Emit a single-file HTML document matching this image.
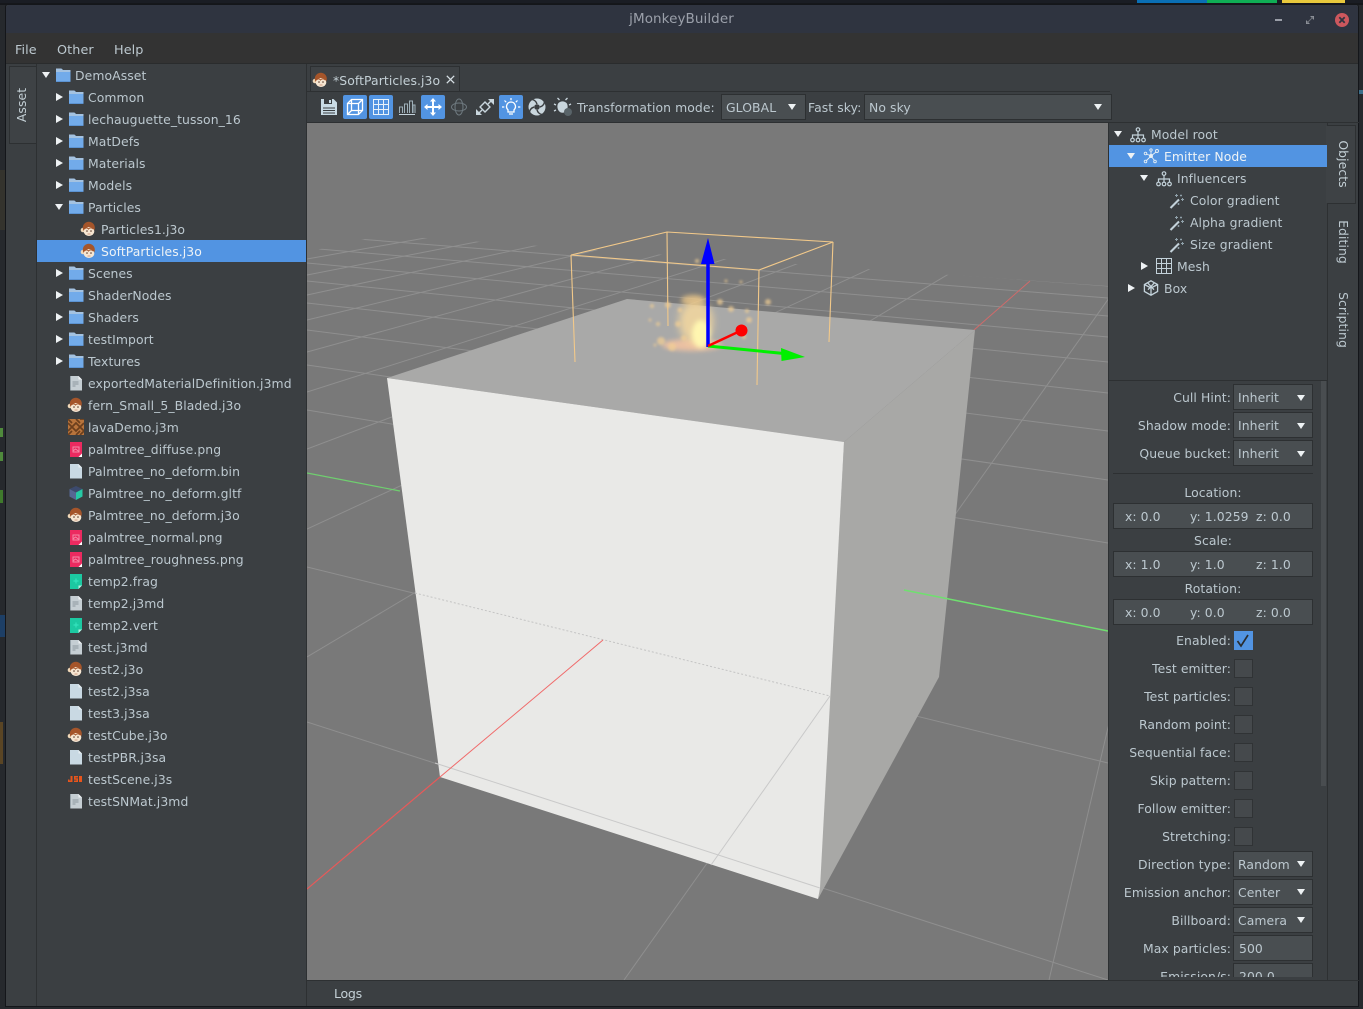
<!DOCTYPE html>
<html><head><meta charset="utf-8"><title>jMonkeyBuilder</title>
<style>
html,body{margin:0;padding:0;width:1363px;height:1009px;overflow:hidden;background:#26292d}
body{position:relative;font-family:"DejaVu Sans","Liberation Sans",sans-serif;font-size:12.4px;letter-spacing:.08px;color:#bcc8cf}
div,svg,i{position:absolute;display:block}
.p{background:#3b3f42}
.t{height:22px;line-height:22px;white-space:nowrap;margin-top:1px}
.l{height:22px;line-height:22px;white-space:nowrap;text-align:right;left:1109px;width:122px;margin-top:1px}
.c{height:22px;line-height:22px;white-space:nowrap;text-align:center;left:1113px;width:200px;margin-top:1px}
.i{width:16px;height:16px}
.ar{width:0;height:0;border-style:solid;border-color:transparent}
.ar.r{border-width:4.5px 0 4.5px 7px;border-left-color:#eef2f4}
.ar.d{border-width:6px 4.5px 0 4.5px;border-top-color:#eef2f4}
.cb{left:1233px;width:78px;height:24px;background:#494e51;border:1px solid #2d3032;line-height:24px;padding:0;box-sizing:content-box}
.cb span{position:absolute;left:4px;top:1px}
.cb i{position:absolute;left:63px;top:9px;width:0;height:0;border-style:solid;border-color:transparent;border-width:6px 4.500px 0 4.500px;border-top-color:#eef2f4}
.f{left:1113px;width:198px;height:24px;background:#494e51;border:1px solid #2d3032;line-height:24px}
.f span{position:absolute;top:1px}
.ck{left:1234px;width:17px;height:17px;background:#45494c;border:1px solid #303335}
.b{width:24px;height:24px;background:#5294e2;border-radius:2px;top:95px}
.tb{width:20px;height:20px;top:97px}
.da{left:1297px;border-width:6px 4.500px 0 4.500px !important}
</style></head><body>
<svg width="0" height="0" style="position:absolute">
<defs>
<symbol id="fo" viewBox="0 0 16 16"><path d="M1 1.500h5.300L8 3H15.500v12H1z" fill="#6ea6e4"/><path d="M1 1.500h5.300L8 3h7.500V5.500H1z" fill="#a4c2e0"/><path d="M1 5h14.500v10H1z" fill="#72abea"/><path d="M1 14h14.500v1H1z" fill="#5c93d2"/></symbol>
<symbol id="mk" viewBox="0 0 16 16"><circle cx="3" cy="9" r="2.300" fill="#f0d8b8"/><circle cx="8.800" cy="6.800" r="6" fill="#a5552a"/><ellipse cx="9" cy="10.500" rx="5.300" ry="4.500" fill="#f6e6d2"/><path d="M4.500 8c1-1.500 3-1.500 4 0 1-1.500 3.500-1.500 4.800 0" stroke="#a5552a" fill="none"/><circle cx="7" cy="10" r=".8" fill="#5a3a2a"/><circle cx="11" cy="10" r=".8" fill="#5a3a2a"/><path d="M7.500 13h3" stroke="#c98a70" stroke-width=".8"/></symbol>
<symbol id="dg" viewBox="0 0 16 16"><path d="M3 1h8.500L15 4.500V15.500H3z" fill="#c5ced3"/><path d="M11.500 1L15 4.500h-3.500z" fill="#eef2f4"/><path d="M5.500 7h6M5.500 9h6M5.500 11h3" stroke="#8b969d" stroke-width="1"/><path d="M3 1h1v14.500H3z" fill="#98a4ab"/></symbol>
<symbol id="db" viewBox="0 0 16 16"><path d="M3 1h8.500L15 4.500V15.500H3z" fill="#c9d9e3"/><path d="M11.500 1v3.500H15z" fill="#e8eff3"/></symbol>
<symbol id="pn" viewBox="0 0 16 16"><path d="M3 1h12v15H3z" fill="#ec2a60"/><path d="M11.500 16l3.500-3.500V16z" fill="#fff"/><path d="M6 6h6v5H6z" fill="none" stroke="#f58aa8" stroke-width="1"/><path d="M6 10l2.500-2 3.500 2.500" stroke="#f58aa8" fill="none"/></symbol>
<symbol id="tl" viewBox="0 0 16 16"><path d="M3 1h12v11.500L11.500 16H3z" fill="#1cc9a2"/><path d="M11.500 16v-3.500H15z" fill="#bdf0e2"/><path d="M6.500 8h5M9 5.500v5" stroke="#33e3bd" stroke-width="1.200"/></symbol>
<symbol id="gl" viewBox="0 0 16 16"><path d="M8 1l6.500 3L8 7.500 1.500 4z" fill="#3c4a6d"/><path d="M1.500 4L8 7.500V15l-6.500-3.500z" fill="#566793"/><path d="M14.500 4L8 7.500V15l6.500-3.500z" fill="#27c9a5"/></symbol>
<symbol id="lv" viewBox="0 0 16 16"><rect width="16" height="16" fill="#b8743c"/><path d="M0 4l4 4 4-4 4 4 4-4M0 12l4-4 4 4 4-4 4 4M0 0l4 4M8 0l4 4M8 16l4-4M0 16l4-4M12 16l4-4M12 0l4 0" stroke="#6b3f1d" stroke-width="1.700" fill="none"/></symbol>
<symbol id="js" viewBox="0 0 16 16"><path d="M1 8.500h1.500v1h1V5h2v6H1zM7 5h4v1.500H8.500v.8H11V11H7V9.500h2.500v-.7H7zM12 5h3v6h-3z" fill="#e8551c"/></symbol>
<symbol id="nd" viewBox="0 0 16 16" ><g fill="none" stroke="#c3d2da" stroke-width="1.200"><circle cx="8" cy="2.600" r="1.800"/><circle cx="2.500" cy="13" r="1.800"/><circle cx="8" cy="13" r="1.800"/><circle cx="13.500" cy="13" r="1.800"/><path d="M8 4.500v6.500M2.500 11V8h11v3"/></g></symbol>
<symbol id="em" viewBox="0 0 16 16"><g fill="none" stroke="#e8f0f5" stroke-width=".9"><circle cx="8" cy="8" r="1.500" fill="#e8f0f5"/><circle cx="2.500" cy="5.500" r="1.300"/><circle cx="8" cy="2" r="1.200"/><circle cx="14" cy="3" r="1.500"/><circle cx="2.500" cy="13.500" r="1.300"/><circle cx="12" cy="13.500" r="1.300"/><path d="M8 8L3.500 6M8 8V3.200M8 8l5-4M8 8l-4.500 4.500M8 8l3.500 4.500"/></g></symbol>
<symbol id="wd" viewBox="0 0 16 16"><path d="M1.500 15L10 6.500" stroke="#c3d2da" stroke-width="2"/><path d="M7.500 1v3M6 2.500h3M13.500 5v3M12 6.500h3M12 1.500v2M11 2.500h2M9.500 10v2M8.500 11h2" stroke="#8fa0a9" stroke-width="1"/></symbol>
<symbol id="ms" viewBox="0 0 16 16"><path d="M.5.5h15v15H.5zM5.500.500v15M10.500.500v15M.5 5.500h15M.5 10.500h15" fill="none" stroke="#c3d2da" stroke-width="1"/></symbol>
<symbol id="bx" viewBox="0 0 16 16"><path d="M8 .8l6.600 3.700v7L8 15.200l-6.600-3.700v-7zM1.400 4.500L8 8l6.600-3.500M8 8v7.200M4.500 2.700l6.500 7M11.500 2.700L5 9.700" fill="none" stroke="#c3d2da" stroke-width="1.300"/></symbol>
<filter id="bl" x="-40%" y="-40%" width="180%" height="180%"><feGaussianBlur stdDeviation="4"/></filter>
<filter id="bm" x="-40%" y="-40%" width="180%" height="180%"><feGaussianBlur stdDeviation="2.500"/></filter>
<filter id="bs" x="-60%" y="-60%" width="220%" height="220%"><feGaussianBlur stdDeviation="1.300"/></filter>
<clipPath id="gc"><path d="M383 235L1108 286V980H307V252z"/></clipPath>
</defs></svg>

<!-- outer desktop -->
<div style="left:0;top:0;width:1363px;height:3px;background:#1a1d24"></div>
<div style="left:0;top:3px;width:1363px;height:2px;background:#15171b"></div>
<div style="left:1137px;top:0;width:70px;height:3px;background:#0a6fb5"></div>
<div style="left:1207px;top:0;width:70px;height:3px;background:#0fae55"></div>
<div style="left:1282px;top:0;width:63px;height:3px;background:#e8c83c"></div>
<div style="left:0;top:615px;width:5px;height:22px;background:#1d3f66"></div>
<div style="left:0;top:428px;width:3px;height:9px;background:#4f8a3c"></div>
<div style="left:0;top:452px;width:3px;height:9px;background:#4f8a3c"></div>
<div style="left:0;top:490px;width:3px;height:13px;background:#3f7a2c"></div>
<div style="left:0;top:722px;width:3px;height:42px;background:#5a4524"></div>
<div style="left:0;top:170px;width:5px;height:60px;background:#34332d"></div>
<div style="left:1359px;top:90px;width:4px;height:4px;background:#3a6e8a"></div>

<!-- window -->
<div style="left:5px;top:4px;width:1354px;height:1003px;background:#3b3f42;border:1px solid #14161a;box-sizing:border-box;border-radius:3px 3px 0 0;overflow:hidden"></div>
<div style="left:6px;top:5px;width:1352px;height:28px;background:#2f3440;border-radius:3px 3px 0 0"></div>
<div style="left:0;top:8px;width:1363px;height:22px;line-height:22px;text-align:center;font-size:13.500px;color:#9ba0aa">jMonkeyBuilder</div>
<div style="left:1275px;top:19px;width:7px;height:2px;background:#9a9ea8"></div>
<svg style="left:1306px;top:16px" width="8" height="8" viewBox="0 0 8 8"><path d="M4 0h4v4zM0 4l4 4H0z" fill="#8d9199"/><path d="M1 7l6-6" stroke="#6d7179"/></svg>
<svg style="left:1335px;top:13px" width="14" height="14" viewBox="0 0 14 14"><circle cx="7" cy="7" r="7" fill="#cc575d"/><path d="M4.300 4.300l5.400 5.400M9.700 4.300l-5.400 5.400" stroke="#2f3440" stroke-width="1.800"/></svg>
<!-- menu -->
<div style="left:6px;top:33px;width:1352px;height:30px;background:#333333"></div>
<div style="left:6px;top:63px;width:1352px;height:1px;background:#2a2c2d"></div>
<div class="t" style="left:15px;top:39px;font-size:12.800px">File</div>
<div class="t" style="left:57px;top:39px;font-size:12.800px">Other</div>
<div class="t" style="left:114px;top:39px;font-size:12.800px">Help</div>

<!-- left tab -->
<div style="left:9px;top:66px;width:28px;height:78px;background:#3e4245;border:1px solid #2d3032;border-right:0;box-sizing:border-box"></div>
<div class="t" style="left:-8px;top:93px;width:60px;text-align:center;transform:rotate(-90deg);color:#c4d0d6">Asset</div>
<div style="left:36px;top:64px;width:1px;height:942px;background:#2d3032"></div>
<div style="left:306px;top:64px;width:1px;height:942px;background:#2d3032"></div>

<!-- asset tree -->
<div style="left:37px;top:240px;width:269px;height:22px;background:#5294e2"></div>
<i class="ar d" style="left:42px;top:72px"></i><svg class="i" style="left:55px;top:67px"><use href="#fo"/></svg><div class="t" style="left:75px;top:64px">DemoAsset</div>
<i class="ar r" style="left:56px;top:93px"></i><svg class="i" style="left:68px;top:89px"><use href="#fo"/></svg><div class="t" style="left:88px;top:86px">Common</div>
<i class="ar r" style="left:56px;top:115px"></i><svg class="i" style="left:68px;top:111px"><use href="#fo"/></svg><div class="t" style="left:88px;top:108px">lechauguette_tusson_16</div>
<i class="ar r" style="left:56px;top:137px"></i><svg class="i" style="left:68px;top:133px"><use href="#fo"/></svg><div class="t" style="left:88px;top:130px">MatDefs</div>
<i class="ar r" style="left:56px;top:159px"></i><svg class="i" style="left:68px;top:155px"><use href="#fo"/></svg><div class="t" style="left:88px;top:152px">Materials</div>
<i class="ar r" style="left:56px;top:181px"></i><svg class="i" style="left:68px;top:177px"><use href="#fo"/></svg><div class="t" style="left:88px;top:174px">Models</div>
<i class="ar d" style="left:55px;top:204px"></i><svg class="i" style="left:68px;top:199px"><use href="#fo"/></svg><div class="t" style="left:88px;top:196px">Particles</div>
<svg class="i" style="left:80px;top:221px"><use href="#mk"/></svg><div class="t" style="left:101px;top:218px">Particles1.j3o</div>
<svg class="i" style="left:80px;top:243px"><use href="#mk"/></svg><div class="t" style="left:101px;top:240px;color:#eef3f6">SoftParticles.j3o</div>
<i class="ar r" style="left:56px;top:269px"></i><svg class="i" style="left:68px;top:265px"><use href="#fo"/></svg><div class="t" style="left:88px;top:262px">Scenes</div>
<i class="ar r" style="left:56px;top:291px"></i><svg class="i" style="left:68px;top:287px"><use href="#fo"/></svg><div class="t" style="left:88px;top:284px">ShaderNodes</div>
<i class="ar r" style="left:56px;top:313px"></i><svg class="i" style="left:68px;top:309px"><use href="#fo"/></svg><div class="t" style="left:88px;top:306px">Shaders</div>
<i class="ar r" style="left:56px;top:335px"></i><svg class="i" style="left:68px;top:331px"><use href="#fo"/></svg><div class="t" style="left:88px;top:328px">testImport</div>
<i class="ar r" style="left:56px;top:357px"></i><svg class="i" style="left:68px;top:353px"><use href="#fo"/></svg><div class="t" style="left:88px;top:350px">Textures</div>
<svg class="i" style="left:67px;top:375px"><use href="#dg"/></svg><div class="t" style="left:88px;top:372px">exportedMaterialDefinition.j3md</div>
<svg class="i" style="left:67px;top:397px"><use href="#mk"/></svg><div class="t" style="left:88px;top:394px">fern_Small_5_Bladed.j3o</div>
<svg class="i" style="left:68px;top:419px"><use href="#lv"/></svg><div class="t" style="left:88px;top:416px">lavaDemo.j3m</div>
<svg class="i" style="left:67px;top:441px"><use href="#pn"/></svg><div class="t" style="left:88px;top:438px">palmtree_diffuse.png</div>
<svg class="i" style="left:67px;top:463px"><use href="#db"/></svg><div class="t" style="left:88px;top:460px">Palmtree_no_deform.bin</div>
<svg class="i" style="left:68px;top:485px"><use href="#gl"/></svg><div class="t" style="left:88px;top:482px">Palmtree_no_deform.gltf</div>
<svg class="i" style="left:67px;top:507px"><use href="#mk"/></svg><div class="t" style="left:88px;top:504px">Palmtree_no_deform.j3o</div>
<svg class="i" style="left:67px;top:529px"><use href="#pn"/></svg><div class="t" style="left:88px;top:526px">palmtree_normal.png</div>
<svg class="i" style="left:67px;top:551px"><use href="#pn"/></svg><div class="t" style="left:88px;top:548px">palmtree_roughness.png</div>
<svg class="i" style="left:67px;top:573px"><use href="#tl"/></svg><div class="t" style="left:88px;top:570px">temp2.frag</div>
<svg class="i" style="left:67px;top:595px"><use href="#dg"/></svg><div class="t" style="left:88px;top:592px">temp2.j3md</div>
<svg class="i" style="left:67px;top:617px"><use href="#tl"/></svg><div class="t" style="left:88px;top:614px">temp2.vert</div>
<svg class="i" style="left:67px;top:639px"><use href="#dg"/></svg><div class="t" style="left:88px;top:636px">test.j3md</div>
<svg class="i" style="left:67px;top:661px"><use href="#mk"/></svg><div class="t" style="left:88px;top:658px">test2.j3o</div>
<svg class="i" style="left:67px;top:683px"><use href="#db"/></svg><div class="t" style="left:88px;top:680px">test2.j3sa</div>
<svg class="i" style="left:67px;top:705px"><use href="#db"/></svg><div class="t" style="left:88px;top:702px">test3.j3sa</div>
<svg class="i" style="left:67px;top:727px"><use href="#mk"/></svg><div class="t" style="left:88px;top:724px">testCube.j3o</div>
<svg class="i" style="left:67px;top:749px"><use href="#db"/></svg><div class="t" style="left:88px;top:746px">testPBR.j3sa</div>
<svg class="i" style="left:67px;top:771px"><use href="#js"/></svg><div class="t" style="left:88px;top:768px">testScene.j3s</div>
<svg class="i" style="left:67px;top:793px"><use href="#dg"/></svg><div class="t" style="left:88px;top:790px">testSNMat.j3md</div>

<!-- editor tab -->
<div style="left:310px;top:66px;width:150px;height:26px;background:#3e4245;border:1px solid #2d3032;border-bottom:0;box-sizing:border-box"></div>
<svg class="i" style="left:312px;top:72px"><use href="#mk"/></svg>
<div class="t" style="left:333px;top:69px;color:#c4d0d6">*SoftParticles.j3o</div>
<svg style="left:446px;top:75px" width="9" height="9" viewBox="0 0 9 9"><path d="M.8.800l7.400 7.400M8.200.800L.8 8.200" stroke="#d5dee3" stroke-width="1.300"/></svg>
<div style="left:307px;top:91px;width:803px;height:1px;background:#2d3032"></div>

<!-- toolbar -->
<svg class="tb" style="left:319px" viewBox="0 0 20 20"><path d="M2 2h12.500L18 5.500V18H2z" fill="#c9dbe5"/><path d="M5 2h8v5H5z" fill="#3b3f42"/><path d="M10 3h2v3h-2z" fill="#c9dbe5"/><path d="M4 11h12M4 13.500h12M4 16h12" stroke="#3b3f42"/></svg>
<div class="b" style="left:343px"></div>
<svg class="tb" style="left:345px" viewBox="0 0 20 20"><path d="M2.500 6.500L6.500 2.500h11v11l-4 4h-11zM2.500 6.500h11v11M13.500 6.500l4-4M6.500 2.500v11h11M6.500 13.500l-4 4" fill="none" stroke="#fff" stroke-width="1.300"/></svg>
<div class="b" style="left:369px"></div>
<svg class="tb" style="left:371px" viewBox="0 0 20 20"><path d="M2.500 2.500h15v15h-15zM7.500 2.500v15M12.500 2.500v15M2.500 7.500h15M2.500 12.500h15" fill="none" stroke="#e8f2fa" stroke-width="1"/></svg>
<svg class="tb" style="left:397px" viewBox="0 0 20 20"><path d="M2.500 16v-6h3v6M7.500 16V7h3v9M12.500 16V4h3v12M16 16V8h2v8" fill="none" stroke="#9fb0b9"/><path d="M2 17.500h16" stroke="#c3d2da"/></svg>
<div class="b" style="left:421px"></div>
<svg class="tb" style="left:423px" viewBox="0 0 20 20"><path d="M10 1l3 3.500h-2V9h4.500V7L19 10l-3.500 3v-2H11v4.500h2L10 19l-3-3.500h2V11H4.500v2L1 10l3.500-3v2H9V4.500H7z" fill="#fff"/></svg>
<svg class="tb" style="left:449px" viewBox="0 0 20 20"><g fill="none" stroke="#6f7a80" stroke-width="1"><ellipse cx="10" cy="10" rx="7.500" ry="4"/><ellipse cx="10" cy="10" rx="4" ry="8"/></g></svg>
<svg class="tb" style="left:475px" viewBox="0 0 20 20"><path d="M3 17l4-4M13 7l4-4" stroke="#c9d6dd" stroke-width="1.400"/><path d="M13 2h6v6zM7 18H1v-6z" fill="#c9d6dd"/><rect x="6.500" y="6.500" width="7" height="7" transform="rotate(45 10 10)" fill="none" stroke="#c9d6dd" stroke-width="1.400"/></svg>
<div class="b" style="left:499px"></div>
<svg class="tb" style="left:501px" viewBox="0 0 20 20"><path d="M10 5a4.500 4.500 0 0 1 3 7.800V15H7v-2.200A4.500 4.500 0 0 1 10 5zM8 17h4" fill="none" stroke="#fff" stroke-width="1.300"/><path d="M10 1v2.300M3.500 3.500l1.700 1.700M16.500 3.500l-1.700 1.700M1 10h2.300M17 10h2.300" stroke="#fff" stroke-width="1.200"/></svg>
<svg class="tb" style="left:527px" viewBox="0 0 20 20"><circle cx="10" cy="10" r="8.500" fill="#c9d6dd"/><circle cx="10" cy="10" r="2.800" fill="#3b3f42"/><path d="M10 7C9 4 6.500 2 3 2.500M13 10c3-1 5-3.500 4.500-7M10 13c1 3 3.500 5 7 4.500M7 10c-3 1-5 3.500-4.500 7" fill="none" stroke="#3b3f42" stroke-width="1.500"/></svg>
<svg class="tb" style="left:553px" viewBox="0 0 20 20"><path d="M5.500 6a5 4 0 0 1 8 0c1.500 2 1.500 5 0 7.500-2 3-6 3-8 0-1.500-2.500-1.500-5.500 0-7.500z" fill="#c9d6dd"/><path d="M6.500 3l-2-2M12.500 3l2-2M3 8L1 7M16 8l2-1M3 13l-2 1" stroke="#c9d6dd" stroke-width="1.300"/><circle cx="15" cy="15" r="4" fill="#596469"/></svg>
<div class="t" style="left:577px;top:96px">Transformation mode:</div>
<div class="cb" style="left:721px;top:94px;width:83px"><span>GLOBAL</span><i style="left:66px"></i></div>
<div class="t" style="left:808px;top:96px">Fast sky:</div>
<div class="cb" style="left:864px;top:94px;width:246px"><span>No sky</span><i style="left:229px"></i></div>
<div style="left:307px;top:122px;width:1052px;height:1px;background:#2d3032"></div>

<!-- viewport -->
<svg style="left:307px;top:123px" width="801" height="857" viewBox="307 123 801 857">
<rect x="307" y="123" width="801" height="857" fill="#797979"/>
<g clip-path="url(#gc)" fill="none" stroke="#8f8f8f" stroke-width="1">
<path d="M307 226L1108 286M307 235L1108 298M307 248L1108 316M307 263L1108 337M307 281L1108 362M307 303L1108 393M307 330L1108 431M307 365L1108 480M307 410L1108 543M307 567L1108 763M307 722L1108 980"/>
<path d="M307 259L1257 90M307 275L1257 90M307 295L1257 90M307 320L1257 90M307 352L1257 90M307 392L1257 90M307 449L1257 90M307 529L1257 90M307 657L1257 90M624 980L1257 90M1049 980L1257 90"/>
</g>
<path d="M307 473L400 491" stroke="#6fcf6f" stroke-width="1.200"/>
<path d="M307 889L440 777" stroke="#e65a5a" stroke-width="1.200"/>
<path d="M974 330L1030 281" stroke="#d16a6a" stroke-width="1"/>
<!-- cube -->
<path d="M387 378L627 299L975 330L844 442z" fill="#a9a9a8"/>
<path d="M844 442L975 330L939 677L818 899z" fill="#a8a8a6"/>
<path d="M387 378L844 442L820 888L818 899L440 777z" fill="#e9e9e7"/>
<path d="M415 593L830 696" stroke="#c4c4c4" stroke-dasharray="2 2" fill="none"/>
<path d="M435 763L820 888" stroke="#c9c9c9" fill="none"/>
<path d="M830 696L711 865" stroke="#c9c9c9" fill="none"/>
<path d="M603 640L440 777" stroke="#f06a6a" stroke-width="1" fill="none"/>
<path d="M904 590L1108 631" stroke="#6fe06f" stroke-width="1.500" fill="none"/>
<!-- particles -->
<g>
<ellipse cx="692" cy="345" rx="30" ry="6" fill="#ffc7a0" opacity=".75" filter="url(#bm)"/>
<ellipse cx="696" cy="322" rx="17" ry="22" fill="#ffdf9e" opacity=".75" filter="url(#bl)"/>
<ellipse cx="701" cy="334" rx="9" ry="14" fill="#fff6b0" filter="url(#bm)"/>
<ellipse cx="693" cy="300" rx="12" ry="5" fill="#eec888" opacity=".75" filter="url(#bm)"/>
<g fill="#f2cf94" opacity=".7" filter="url(#bs)">
<circle cx="668" cy="305" r="3"/><circle cx="652" cy="306" r="2"/><circle cx="658" cy="324" r="2"/><circle cx="661" cy="341" r="4"/><circle cx="672" cy="347" r="4"/><circle cx="678" cy="324" r="3"/><circle cx="768" cy="302" r="3"/><circle cx="747" cy="311" r="2"/><circle cx="749" cy="320" r="3"/><circle cx="731" cy="309" r="3"/><circle cx="697" cy="261" r="2"/><circle cx="741" cy="282" r="1.500"/><circle cx="726" cy="281" r="1.500"/><circle cx="744" cy="337" r="2"/><circle cx="650" cy="320" r="1.500"/><circle cx="655" cy="345" r="1.500"/><circle cx="684" cy="338" r="3"/><circle cx="680" cy="310" r="2.500"/><circle cx="720" cy="302" r="3"/>
</g></g>
<!-- bbox -->
<g fill="none" stroke="#f2c98a" stroke-width="1.100">
<path d="M571 255L667 232L833 242L759 270z"/>
<path d="M571 255L575 362M667 232L668 326M833 242L829 342M759 270L757 385"/>
</g>
<!-- gizmo -->
<path d="M708 347V262" stroke="#0000ff" stroke-width="3.500"/><path d="M708 238L701 264H714.500z" fill="#0000ff"/>
<path d="M708 346L784 353.500" stroke="#00f000" stroke-width="3"/><path d="M805 357L781 348L781.500 361z" fill="#00f000"/>
<path d="M708 346L738 332" stroke="#ff0000" stroke-width="2.500"/><circle cx="741.500" cy="330.500" r="6" fill="#ff0000"/>
</svg>

<!-- logs -->
<div style="left:307px;top:980px;width:1052px;height:1px;background:#2d3032"></div>
<div class="t" style="left:334px;top:982px;color:#c4d0d6;font-size:12.600px;letter-spacing:-.3px">Logs</div>

<!-- right panel -->
<div style="left:1108px;top:123px;width:1px;height:857px;background:#2d3032"></div>
<div style="left:1327px;top:123px;width:1px;height:857px;background:#2d3032"></div>
<div style="left:1327px;top:125px;width:29px;height:79px;background:#3e4245;border:1px solid #2d3032;border-left:0;box-sizing:border-box"></div>
<div style="left:1326px;top:126px;width:2px;height:77px;background:#3e4245"></div>
<div class="t" style="left:1303px;top:152px;width:80px;text-align:center;transform:rotate(90deg);color:#c4d0d6">Objects</div>
<div class="t" style="left:1303px;top:230px;width:80px;text-align:center;transform:rotate(90deg)">Editing</div>
<div class="t" style="left:1303px;top:308px;width:80px;text-align:center;transform:rotate(90deg)">Scripting</div>
<div style="left:1109px;top:145px;width:218px;height:22px;background:#5294e2"></div>
<i class="ar d" style="left:1114px;top:131px"></i><svg class="i" style="left:1130px;top:127px"><use href="#nd"/></svg><div class="t" style="left:1151px;top:123px">Model root</div>
<i class="ar d" style="left:1127px;top:153px"></i><svg class="i" style="left:1143px;top:148px"><use href="#em"/></svg><div class="t" style="left:1164px;top:145px;color:#eef3f6">Emitter Node</div>
<i class="ar d" style="left:1140px;top:175px"></i><svg class="i" style="left:1156px;top:171px"><use href="#nd"/></svg><div class="t" style="left:1177px;top:167px">Influencers</div>
<svg class="i" style="left:1169px;top:193px"><use href="#wd"/></svg><div class="t" style="left:1190px;top:189px">Color gradient</div>
<svg class="i" style="left:1169px;top:215px"><use href="#wd"/></svg><div class="t" style="left:1190px;top:211px">Alpha gradient</div>
<svg class="i" style="left:1169px;top:237px"><use href="#wd"/></svg><div class="t" style="left:1190px;top:233px">Size gradient</div>
<i class="ar r" style="left:1141px;top:262px"></i><svg class="i" style="left:1156px;top:258px"><use href="#ms"/></svg><div class="t" style="left:1177px;top:255px">Mesh</div>
<i class="ar r" style="left:1128px;top:284px"></i><svg class="i" style="left:1143px;top:280px"><use href="#bx"/></svg><div class="t" style="left:1164px;top:277px">Box</div>
<div style="left:1109px;top:380px;width:218px;height:1px;background:#2d3032"></div>
<div style="left:1321px;top:381px;width:5px;height:405px;background:#494d50"></div>

<!-- properties -->
<div class="l" style="top:386px">Cull Hint:</div><div class="cb" style="top:384px"><span>Inherit</span></div><i class="ar d da" style="top:395px"></i>
<div class="l" style="top:414px">Shadow mode:</div><div class="cb" style="top:412px"><span>Inherit</span></div><i class="ar d da" style="top:423px"></i>
<div class="l" style="top:442px">Queue bucket:</div><div class="cb" style="top:440px"><span>Inherit</span></div><i class="ar d da" style="top:451px"></i>
<div style="left:1113px;top:473px;width:200px;height:1px;background:#2d3032"></div>
<div class="c" style="top:481px">Location:</div>
<div class="f" style="top:503px"><span style="left:11px">x: 0.0</span><span style="left:76px;width:58px;overflow:hidden;white-space:nowrap">y: 1.025909</span><span style="left:142px">z: 0.0</span></div>
<div class="c" style="top:529px">Scale:</div>
<div class="f" style="top:551px"><span style="left:11px">x: 1.0</span><span style="left:76px">y: 1.0</span><span style="left:142px">z: 1.0</span></div>
<div class="c" style="top:577px">Rotation:</div>
<div class="f" style="top:599px"><span style="left:11px">x: 0.0</span><span style="left:76px">y: 0.0</span><span style="left:142px">z: 0.0</span></div>
<div class="l" style="top:629px">Enabled:</div>
<div class="ck" style="top:631px;background:#5294e2;border-color:#5294e2"></div><svg style="left:1236px;top:634px" width="15" height="14" viewBox="0 0 15 14"><path d="M1.500 7l3.500 5 7-11" fill="none" stroke="#2a2d30" stroke-width="1.700"/></svg>
<div class="l" style="top:657px">Test emitter:</div><div class="ck" style="top:659px"></div>
<div class="l" style="top:685px">Test particles:</div><div class="ck" style="top:687px"></div>
<div class="l" style="top:713px">Random point:</div><div class="ck" style="top:715px"></div>
<div class="l" style="top:741px">Sequential face:</div><div class="ck" style="top:743px"></div>
<div class="l" style="top:769px">Skip pattern:</div><div class="ck" style="top:771px"></div>
<div class="l" style="top:797px">Follow emitter:</div><div class="ck" style="top:799px"></div>
<div class="l" style="top:825px">Stretching:</div><div class="ck" style="top:827px"></div>
<div class="l" style="top:853px">Direction type:</div><div class="cb" style="top:851px"><span>Random</span></div><i class="ar d da" style="top:861px"></i>
<div class="l" style="top:881px">Emission anchor:</div><div class="cb" style="top:879px"><span>Center</span></div><i class="ar d da" style="top:889px"></i>
<div class="l" style="top:909px">Billboard:</div><div class="cb" style="top:907px"><span>Camera</span></div><i class="ar d da" style="top:917px"></i>
<div class="l" style="top:937px">Max particles:</div><div class="cb" style="top:935px"><span style="left:5px">500</span></div>
<div class="l" style="top:965px">Emission/s:</div><div class="cb" style="top:963px"><span style="left:5px">200.0</span></div>
<div style="left:1109px;top:977px;width:218px;height:29px;background:#3b3f42"></div>
<div style="left:1327px;top:977px;width:1px;height:3px;background:#2d3032"></div>
<div style="left:1109px;top:980px;width:250px;height:1px;background:#2d3032"></div>
<div style="left:5px;top:1006px;width:1354px;height:1px;background:#14161a"></div>
</body></html>
